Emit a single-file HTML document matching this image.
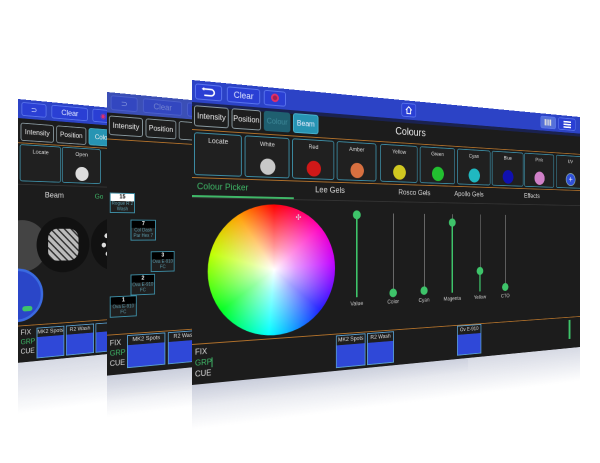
<!DOCTYPE html>
<html><head><meta charset="utf-8">
<style>
*{margin:0;padding:0;box-sizing:border-box}
html,body{width:600px;height:463px;background:#fff;overflow:hidden;font-family:"Liberation Sans",sans-serif}
.scr{position:absolute;left:0;top:0;width:520px;height:305px;transform-origin:0 0;background:#1c1c1c;overflow:visible}
.in{position:absolute;left:0;top:0;width:520px;height:305px;overflow:hidden;background:#1c1c1c}
.a{position:absolute}
.hdr{left:0;top:0;width:520px;height:22px;background:#2c43c6}
.hb{position:absolute;top:3px;height:16px;background:#2a3fd4;border:1px solid #5a75ee;border-radius:3px;color:#dfe6ff;font-size:9px;text-align:center;line-height:14px}
.tb{position:absolute;top:25px;height:21px;background:#1e1e1e;border:1px solid #8a9aa0;border-radius:3px;color:#eee;font-size:8px;text-align:center;line-height:19px;white-space:nowrap;overflow:hidden}
.ol{position:absolute;left:0;width:520px;height:1px;background:#b0702a}
.pb{position:absolute;top:52px;width:50px;height:43px;background:#202020;border:1px solid #3d8ea6;border-radius:3px;color:#ddd;font-size:6.5px;text-align:center;padding-top:4px}
.pb i{position:absolute;left:16px;top:22px;width:17px;height:17px;border-radius:50%}
.tab{position:absolute;top:101px;font-size:8.5px;color:#ddd}
.sl{position:absolute;top:131px;width:24px;height:96px}
.sl .t{position:absolute;left:11.5px;top:0;width:1px;height:94px;background:#777}
.sl .g{position:absolute;left:11px;width:2px;background:#3ec46a}
.sl .h{position:absolute;left:7px;width:10px;height:10px;border-radius:50%;background:#3ec46a;margin-top:-5px}
.lbl{position:absolute;top:229px;font-size:6.5px;color:#ccc;width:40px;text-align:center}
.fx{position:absolute;left:3px;font-size:8px;color:#ddd}
.bb{position:absolute;top:266px;height:36px;border:1px solid #5aa0d0;background:#2f48d8}
.bb span{display:block;height:10px;background:#1e1e1e;color:#ddd;font-size:6.5px;text-align:center;line-height:10px;white-space:nowrap;overflow:hidden}
.refl{position:absolute;left:0;top:305px;width:520px;height:45px;background:linear-gradient(rgba(165,172,195,.45),rgba(255,255,255,0))}
.fb{position:absolute;border:1px solid #3d8ea6;background:#1f1f1f;font-size:5px;color:#5e9fb0;text-align:center}
.fb b{display:block;background:#000;color:#fff;font-size:6px;line-height:8px}
</style></head><body>

<!-- BACK SCREEN -->
<div class="scr" style="transform:matrix3d(0.8672,0.1437,0,0.000627,0,0.865,0,0,0,0,1,0,18,99,0,1)">
<div class="in">
 <div class="a hdr"></div>
 <div class="hb" style="left:4px;width:30px">&#x2283;</div>
 <div class="hb" style="left:40px;width:46px">Clear</div>
 <div class="hb" style="left:92px;width:28px"><span style="color:#e0306a">◉</span></div>
 <div class="tb" style="left:3px;width:40px;top:27px">Intensity</div>
 <div class="tb" style="left:46px;width:38px;top:27px">Position</div>
 <div class="tb" style="left:87px;width:40px;top:27px;background:#2794b3;border-color:#4ab">Colour</div>
 <div class="ol" style="top:50px"></div>
 <div class="pb" style="left:2px">Locate</div>
 <div class="pb" style="left:53px">Open<i style="background:#ddd"></i></div>
 <div class="ol" style="top:98px;background:#333"></div>
 <div class="tab" style="left:32px;top:105px;font-size:9px">Beam</div>
 <div class="tab" style="left:95px;top:105px;color:#3fb868">Go</div>
 <div class="a" style="left:-25px;top:140px;width:60px;height:60px;border-radius:50%;background:#444"></div>
 <div class="a" style="left:22px;top:136px;width:66px;height:66px;border-radius:50%;background:#111"></div>
 <div class="a" style="left:36px;top:150px;width:38px;height:38px;background:repeating-linear-gradient(45deg,#bbb 0 4px,#333 4px 6px);border-radius:30%"></div>
 <div class="a" style="left:90px;top:136px;width:66px;height:66px;border-radius:50%;background:#111"></div>
 <div class="a" style="left:104px;top:150px;width:38px;height:38px;border-radius:50%;border:6px dotted #ddd"></div>
 <div class="a" style="left:-30px;top:196px;width:60px;height:62px;border-radius:0 40px 40px 0;background:#2a46c8;border:3px solid #3a6ae0"></div>
 <div class="a" style="left:5px;top:240px;width:12px;height:6px;border-radius:3px;background:#3ec46a"></div>
 <div class="ol" style="top:262px"></div>
 <div class="fx" style="top:266px">FIX</div><div class="fx" style="top:277px;color:#3fb868">GRP</div><div class="fx" style="top:288px">CUE</div>
 <div class="bb" style="left:22px;width:34px"><span>MK2 Spots</span></div>
 <div class="bb" style="left:58px;width:36px"><span>R2 Wash</span></div>
 <div class="bb" style="left:96px;width:36px"><span>C</span></div>
</div>
<div class="refl" style="height:60px"></div>
</div>

<!-- MIDDLE SCREEN -->
<div class="scr" style="transform:matrix3d(0.9873,0.1454,0,0.000627,0,0.93,0,0,0,0,1,0,107,92,0,1)">
<div class="in">
 <div class="a hdr" style="background:#3b4fb6"></div>
 <div class="hb" style="left:4px;width:30px;background:#3347c0;border-color:#4b5fcc;color:#8898dd">&#x2283;</div>
 <div class="hb" style="left:40px;width:46px;background:#3347c0;border-color:#4b5fcc;color:#7585d0">Clear</div>
 <div class="hb" style="left:92px;width:28px;background:#3347c0;border-color:#4b5fcc"></div>
 <div class="tb" style="left:2px;width:38px;top:25px">Intensity</div>
 <div class="tb" style="left:43px;width:36px;top:25px">Position</div>
 <div class="tb" style="left:82px;width:40px;top:25px">C</div>
 <div class="ol" style="top:50px"></div>
 <div class="fb" style="left:3px;top:108px;width:28px;height:22px"><b style="background:#fff;color:#000">15</b>Rogue R 2<br>Wash</div>
 <div class="fb" style="left:26px;top:137px;width:29px;height:23px"><b>7</b>Col Dash<br>Par Hex 7</div>
 <div class="fb" style="left:49px;top:172px;width:28px;height:23px"><b>3</b>Ova E-910<br>FC</div>
 <div class="fb" style="left:26px;top:197px;width:28px;height:23px"><b>2</b>Ova E-910<br>FC</div>
 <div class="fb" style="left:3px;top:220px;width:30px;height:23px"><b>1</b>Ova E-910<br>FC</div>
 <div class="ol" style="top:261px"></div>
 <div class="fx" style="top:266px">FIX</div><div class="fx" style="top:277px;color:#3fb868">GRP</div><div class="fx" style="top:288px">CUE</div>
 <div class="bb" style="left:22px;width:44px;top:263px"><span>MK2 Spots</span></div>
 <div class="bb" style="left:69px;width:40px;top:263px"><span>R2 Wash</span></div>
</div>
<div class="refl"></div>
</div>

<!-- FRONT SCREEN -->
<div class="scr" style="transform:matrix3d(1.10987,0.14452,0,0.000627,0,1,0,0,0,0,1,0,192,80,0,1)">
<div class="in">
 <div class="a hdr"></div>
 <div class="hb" style="left:3px;width:28px"><svg width="18" height="12" viewBox="0 0 20 12" style="margin-top:1px"><path d="M5 2.5H13a3.5 3.5 0 0 1 0 7H5" fill="none" stroke="#fff" stroke-width="1.8"/><path d="M5 0.5L2 2.5L5 4.5Z" fill="#fff"/></svg></div>
 <div class="hb" style="left:36px;width:36px;font-size:9px">Clear</div>
 <div class="hb" style="left:76px;width:25px"><span style="display:inline-block;width:9px;height:9px;margin-top:2px;border-radius:50%;border:2px solid #e0306a;background:#a02050"></span></div>
 <div class="hb" style="left:244px;width:20px"><svg width="10" height="10" viewBox="0 0 10 10" style="margin-top:2px"><path d="M1 5L5 1L9 5M2.5 4V9H7.5V4" fill="none" stroke="#fff" stroke-width="1.2"/></svg></div>
 <div class="hb" style="left:452px;width:26px;background:#5570d8"><span style="display:inline-block;width:12px;height:8px;margin-top:3px;background:repeating-linear-gradient(90deg,#ddd 0 2px,#5570d8 2px 3px)"></span></div>
 <div class="hb" style="left:482px;width:30px"><span style="display:inline-block;width:13px;height:9px;margin-top:3px;background:linear-gradient(#fff 0 2px,transparent 2px 3.5px,#fff 3.5px 5.5px,transparent 5.5px 7px,#fff 7px 9px)"></span></div>
 <div class="a" style="left:0;top:22px;width:520px;height:4px;background:#1a2250"></div>
 <div class="tb" style="left:2px;width:36px">Intensity</div>
 <div class="tb" style="left:41px;width:32px">Position</div>
 <div class="tb" style="left:76px;width:30px;background:#1f5f70;border-color:#1f5f70;color:#3f8a9a">Colour</div>
 <div class="tb" style="left:109px;width:30px;background:#2794b3;border-color:#4ab4d0;color:#eef">Beam</div>
 <div class="a" style="left:236px;top:29px;font-size:12px;color:#eee">Colours</div>
 <div class="ol" style="top:49px"></div>
 <div class="pb" style="left:2px;font-size:7px">Locate</div>
 <div class="pb" style="left:55px">White<i style="background:#c8c8c8"></i></div>
 <div class="pb" style="left:108px">Red<i style="background:#d01818"></i></div>
 <div class="pb" style="left:161px">Amber<i style="background:#d87040"></i></div>
 <div class="pb" style="left:216px">Yellow<i style="background:#d0c820"></i></div>
 <div class="pb" style="left:269px">Green<i style="background:#22c030"></i></div>
 <div class="pb" style="left:322px">Cyan<i style="background:#20b8c0"></i></div>
 <div class="pb" style="left:374px">Blue<i style="background:#1010b0"></i></div>
 <div class="pb" style="left:425px">Pink<i style="background:#d080c8"></i></div>
 <div class="pb" style="left:478px">UV<i style="background:#3050d8;border:1px solid #8aa;color:#fff;font-style:normal;font-size:12px;line-height:15px">+</i></div>
 <div class="ol" style="top:97px"></div>
 <div class="tab" style="left:5px;font-size:9px;color:#3fb868;top:101px">Colour Picker</div>
 <div class="tab" style="left:135px;font-size:9px">Lee Gels</div>
 <div class="tab" style="left:240px">Rosco Gels</div>
 <div class="tab" style="left:318px">Apollo Gels</div>
 <div class="tab" style="left:425px">Effects</div>
 <div class="a" style="left:0;top:115px;width:110px;height:2px;background:#3fb868"></div>
 <div class="a" style="left:0;top:117px;width:520px;height:1px;background:#333"></div>
 <div class="a" style="left:16px;top:123px;width:143px;height:138px;border-radius:50%;background:conic-gradient(from 0deg,#ff0000,#ff00c0 50deg,#c000ff 85deg,#2020ff 130deg,#00ffff 185deg,#00ff20 235deg,#c0ff00 285deg,#ffa000 325deg,#ff0000)"></div>
 <div class="a" style="left:16px;top:123px;width:143px;height:138px;border-radius:50%;background:radial-gradient(closest-side,#fff,rgba(255,255,255,.6) 35%,rgba(255,255,255,0))"></div>
 <div class="a" style="left:112px;top:132px;color:#ddd;font-size:8px">✣</div>

 <div class="sl" style="left:174px"><div class="t"></div><div class="g" style="top:2px;height:92px"></div><div class="h" style="top:2px"></div></div>
 <div class="sl" style="left:221px"><div class="t"></div><div class="g" style="top:88px;height:6px"></div><div class="h" style="top:91px"></div></div>
 <div class="sl" style="left:263px"><div class="t"></div><div class="g" style="top:88px;height:6px"></div><div class="h" style="top:90px"></div></div>
 <div class="sl" style="left:303px"><div class="t"></div><div class="g" style="top:10px;height:84px"></div><div class="h" style="top:10px"></div></div>
 <div class="sl" style="left:344px"><div class="t"></div><div class="g" style="top:69px;height:25px"></div><div class="h" style="top:69px"></div></div>
 <div class="sl" style="left:383px"><div class="t"></div><div class="g" style="top:88px;height:6px"></div><div class="h" style="top:90px"></div></div>
 <div class="lbl" style="left:166px">Value</div>
 <div class="lbl" style="left:213px">Color</div>
 <div class="lbl" style="left:255px">Cyan</div>
 <div class="lbl" style="left:295px">Magenta</div>
 <div class="lbl" style="left:336px">Yellow</div>
 <div class="lbl" style="left:375px">CTO</div>

 <div class="ol" style="top:264px"></div>
 <div class="fx" style="top:268px">FIX</div><div class="fx" style="top:279px;color:#3fb868">GRP</div><div class="fx" style="top:290px">CUE</div>
 <div class="a" style="left:20px;top:279px;width:1px;height:10px;background:#3fb868"></div>
 <div class="bb" style="left:160px;width:37px"><span>MK2 Spots</span></div>
 <div class="bb" style="left:199px;width:35px"><span>R2 Wash</span></div>
 <div class="bb" style="left:322px;width:36px;top:265px"><span>Ov E-910</span></div>
 <div class="a" style="left:500px;top:268px;width:3px;height:25px;background:#3ec46a"></div>
</div>
<div class="refl"></div>
</div>
</body></html>
